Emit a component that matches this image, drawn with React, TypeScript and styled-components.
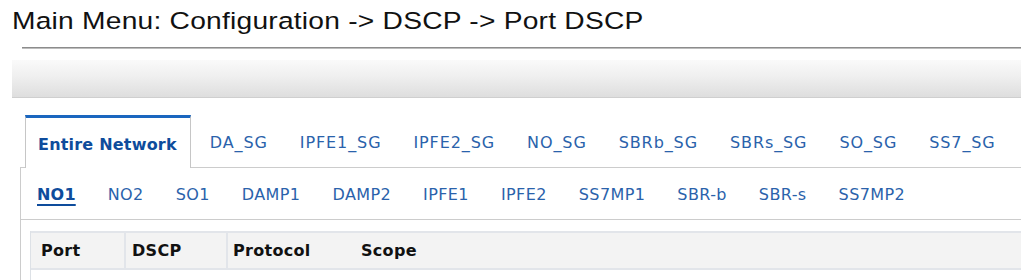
import styled, { createGlobalStyle } from "styled-components";

const GlobalStyle = createGlobalStyle`
  html, body {
    margin: 0;
    padding: 0;
    background: #ffffff;
  }
  body {
    font-family: "DejaVu Sans", "Liberation Sans", sans-serif;
  }
`;

// Whole page, right edge sits at x=1021
const Page = styled.div`
  padding: 0 11px 0 12px;
  width: 1032px;
  box-sizing: border-box;
  overflow: hidden;
`;

// The heading in the shot is a stretched Arial-like face
const Title = styled.h1`
  margin: 7px 0 0 0;
  font-family: "Liberation Sans", Arial, sans-serif;
  font-weight: normal;
  font-size: 24.5px;
  letter-spacing: 0.2px;
  line-height: 28px;
  color: #111111;
  white-space: nowrap;
  transform: scaleX(1.15);
  transform-origin: left center;
`;

const Rule = styled.div`
  margin: 12px 0 0 10px;
  height: 1px;
  background: #8c8c8c;
  border-bottom: 1px solid #bdbdbd;
`;

// Empty gradient toolbar below the title
const Toolbar = styled.div`
  margin-top: 11px;
  height: 37px;
  background: linear-gradient(to bottom, #fafafa 0%, #efefef 45%, #dedede 100%);
  border-bottom: 1px solid #cfcfcf;
`;

const TabsWrap = styled.div`
  margin: 17px 0 0 8px;
`;

const TabStrip = styled.div`
  display: flex;
  align-items: stretch;
  height: 52px;
  padding-left: 5px;
  border-bottom: 1px solid #cccccc;
`;

const Tab = styled.div<{ $active?: boolean }>`
  display: flex;
  align-items: center;
  box-sizing: border-box;
  white-space: nowrap;
  font-size: 16px;
  letter-spacing: ${(p) => (p.$active ? "0.2px" : "0.9px")};
  cursor: pointer;
  ${(p) =>
    p.$active
      ? `
    height: 53px;
    margin: 0 5px -1px 0;
    padding: 3px 13px 0 12px;
    background: #ffffff;
    border-top: 3px solid #1a66bf;
    border-left: 1px solid #c6c6c6;
    border-right: 1px solid #c6c6c6;
    color: #0e4c9c;
    font-weight: bold;
  `
      : `
    padding: 3px 16px 0 16px;
    color: #2a62ab;
  `}
  &:nth-child(2) {
    padding-left: 14px;
  }
`;

const Panel = styled.div`
  border-left: 1px solid #cccccc;
`;

const SubTabs = styled.div`
  display: flex;
  align-items: center;
  gap: 32px;
  height: 50px;
  padding: 1px 0 0 16px;
  border-bottom: 1px solid #cccccc;
`;

const SubTab = styled.span<{ $active?: boolean }>`
  font-size: 16px;
  letter-spacing: ${(p) => (p.$active ? "0.2px" : "0.4px")};
  white-space: nowrap;
  color: ${(p) => (p.$active ? "#0e4c9c" : "#2a62ab")};
  font-weight: ${(p) => (p.$active ? "bold" : "normal")};
  text-decoration: ${(p) => (p.$active ? "underline" : "none")};
  text-decoration-thickness: 2px;
  text-underline-offset: 4px;
  cursor: pointer;
`;

const TableArea = styled.div`
  padding: 11px 0 0 9px;
`;

const Table = styled.div`
  border-left: 1px solid #dde1e6;
`;

const HeaderRow = styled.div`
  display: grid;
  grid-template-columns: 95px 102px 127px 1fr;
  height: 39px;
  box-sizing: border-box;
  background: #f3f3f3;
  border-top: 2px solid #e2e5ea;
  border-bottom: 2px solid #e2e5ea;
`;

const HeadCell = styled.div<{ $divider?: boolean; $pad: number }>`
  display: flex;
  align-items: center;
  padding-left: ${(p) => p.$pad}px;
  border-right: ${(p) => (p.$divider ? "2px solid #e2e5ea" : "none")};
  font-size: 16px;
  font-weight: bold;
  letter-spacing: 0.3px;
  color: #111111;
`;

const BodyRow = styled.div`
  height: 11px;
`;

const mainTabs = [
  "DA_SG",
  "IPFE1_SG",
  "IPFE2_SG",
  "NO_SG",
  "SBRb_SG",
  "SBRs_SG",
  "SO_SG",
  "SS7_SG",
];

const subTabs = [
  "NO1",
  "NO2",
  "SO1",
  "DAMP1",
  "DAMP2",
  "IPFE1",
  "IPFE2",
  "SS7MP1",
  "SBR-b",
  "SBR-s",
  "SS7MP2",
];

export default function App() {
  return (
    <>
      <GlobalStyle />
      <Page>
        <Title>Main Menu: Configuration -&gt; DSCP -&gt; Port DSCP</Title>
        <Rule />
        <Toolbar />
        <TabsWrap>
          <TabStrip>
            <Tab $active>Entire Network</Tab>
            {mainTabs.map((t) => (
              <Tab key={t}>{t}</Tab>
            ))}
          </TabStrip>
          <Panel>
            <SubTabs>
              {subTabs.map((t, i) => (
                <SubTab key={t} $active={i === 0}>
                  {t}
                </SubTab>
              ))}
            </SubTabs>
            <TableArea>
              <Table>
                <HeaderRow>
                  <HeadCell $divider $pad={10}>Port</HeadCell>
                  <HeadCell $divider $pad={6}>DSCP</HeadCell>
                  <HeadCell $pad={5}>Protocol</HeadCell>
                  <HeadCell $pad={6}>Scope</HeadCell>
                </HeaderRow>
                <BodyRow />
              </Table>
            </TableArea>
          </Panel>
        </TabsWrap>
      </Page>
    </>
  );
}
